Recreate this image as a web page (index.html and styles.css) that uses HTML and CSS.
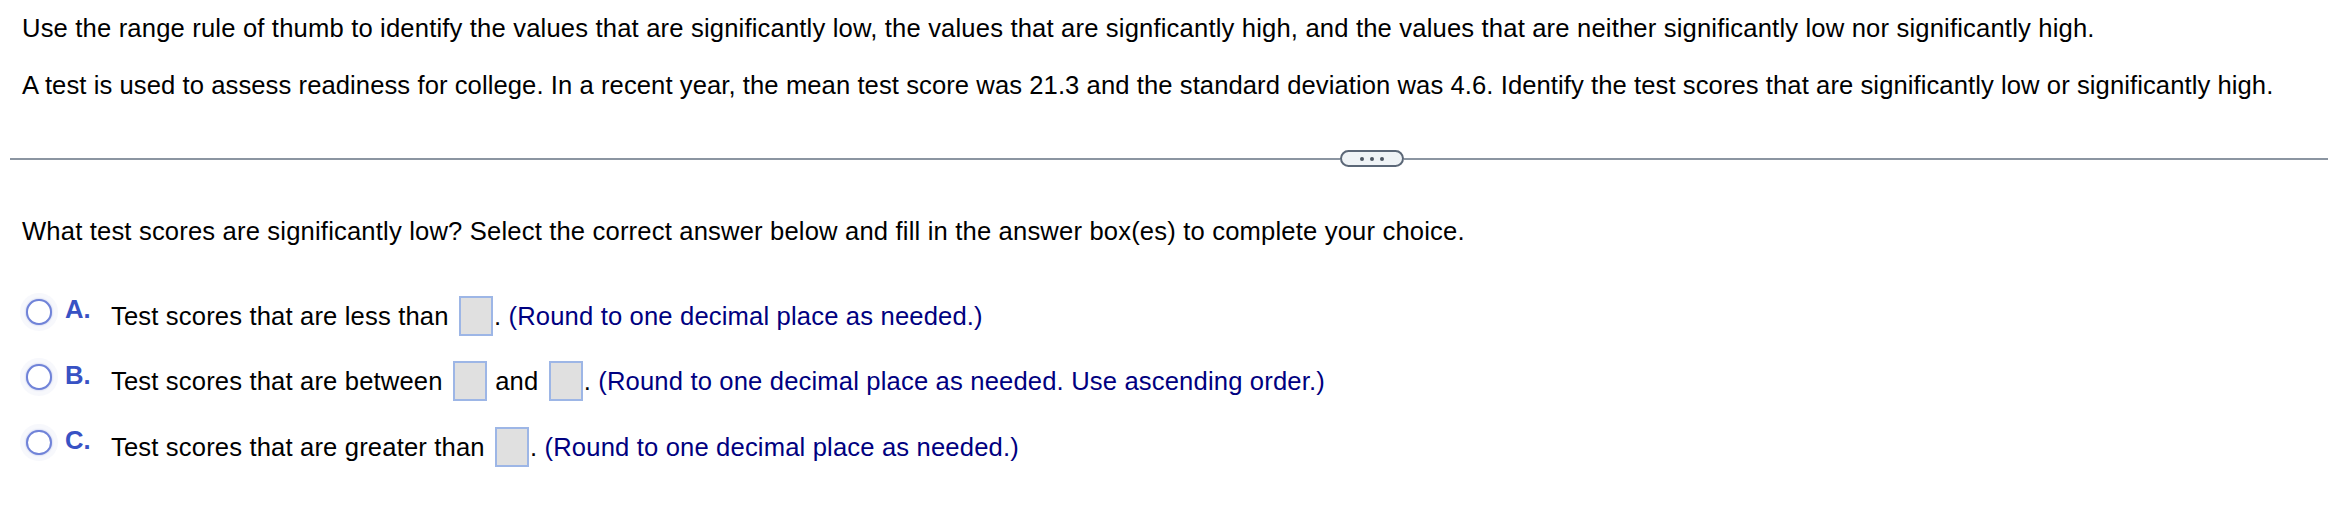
FILE: index.html
```html
<!DOCTYPE html>
<html>
<head>
<meta charset="utf-8">
<link rel="stylesheet" href="styles.css">
</head>
<body>
<div class="page">
  <p class="intro first">Use the range rule of thumb to identify the values that are significantly low, the values that are signficantly high, and the values that are neither significantly low nor significantly high.</p>
  <p class="intro second">A test is used to assess readiness for college. In a recent year, the mean test score was 21.3 and the standard deviation was 4.6. Identify the test scores that are significantly low or significantly high.</p>
</div>
<div class="divider">
  <span class="rule rule-left"></span>
  <span class="pill"><i></i><i></i><i></i></span>
  <span class="rule rule-right"></span>
</div>
<div class="page">
  <p class="question">What test scores are significantly low? Select the correct answer below and fill in the answer box(es) to complete your choice.</p>
  <div class="options">
    <div class="option">
      <span class="radio"></span>
      <div class="opt-text"><span class="label">A.</span>Test scores that are less than <span class="box"></span>. <span class="hint">(Round to one decimal place as needed.)</span></div>
    </div>
    <div class="option">
      <span class="radio"></span>
      <div class="opt-text"><span class="label">B.</span>Test scores that are between <span class="box"></span> and <span class="box"></span>. <span class="hint">(Round to one decimal place as needed. Use ascending order.)</span></div>
    </div>
    <div class="option">
      <span class="radio"></span>
      <div class="opt-text"><span class="label">C.</span>Test scores that are greater than <span class="box"></span>. <span class="hint">(Round to one decimal place as needed.)</span></div>
    </div>
  </div>
</div>
</body>
</html>
```

FILE: styles.css
```css
html, body {
  margin: 0;
  padding: 0;
  background: #ffffff;
}
body {
  font-family: "Liberation Sans", Arial, sans-serif;
  font-size: 25.6px;
  color: #000000;
  overflow: hidden;
}
.page {
  padding-left: 22px;
}
.intro, .question {
  margin: 0;
  line-height: 30px;
  white-space: nowrap;
  letter-spacing: 0.17px;
}
.intro.first {
  padding-top: 12.8px;
}
.intro.second {
  margin-top: 27.6px;
  letter-spacing: 0.08px;
}
.divider {
  display: flex;
  align-items: center;
  height: 18px;
  margin-top: 49.6px;
  margin-left: 10px;
}
.rule {
  height: 2px;
  background: #8b95a1;
}
.rule-left {
  flex: none;
  width: 1330px;
}
.rule-right {
  flex: 1;
}
.pill {
  flex: none;
  box-sizing: border-box;
  width: 64px;
  height: 17px;
  border: 2px solid #5b6777;
  border-radius: 9px;
  background: #eff3f6;
  display: flex;
  align-items: center;
  justify-content: center;
  gap: 6px;
}
.pill i {
  display: block;
  width: 4px;
  height: 4px;
  border-radius: 50%;
  background: #4d5763;
}
.question {
  margin-top: 48.5px;
}
.options {
  margin-top: 48.5px;
  display: flex;
  flex-direction: column;
  gap: 23.3px;
}
.option {
  display: flex;
  align-items: flex-start;
}
.radio {
  flex: none;
  box-sizing: border-box;
  width: 25.6px;
  height: 25.6px;
  margin-top: 4px;
  margin-left: 4.2px;
  border-radius: 50%;
  border: 2.4px solid #7083d8;
  background: #ffffff;
  box-shadow: 0 0 2px rgba(90, 110, 210, 0.5), 0 0 0 6px rgba(232, 236, 246, 0.35);
}
.opt-text {
  line-height: 42px;
  white-space: nowrap;
  letter-spacing: 0.16px;
}
.label {
  display: inline-block;
  width: 46px;
  margin-left: 13.2px;
  font-weight: bold;
  color: #3852c4;
  line-height: 26px;
  letter-spacing: 0;
  vertical-align: 6.7px;
}
.box {
  display: inline-block;
  box-sizing: border-box;
  width: 34px;
  height: 40px;
  margin: 0 1px 0 3px;
  border: 2px solid #9db6e6;
  background: #e0e0e0;
  vertical-align: -11px;
}
.hint {
  color: #000080;
}
```
